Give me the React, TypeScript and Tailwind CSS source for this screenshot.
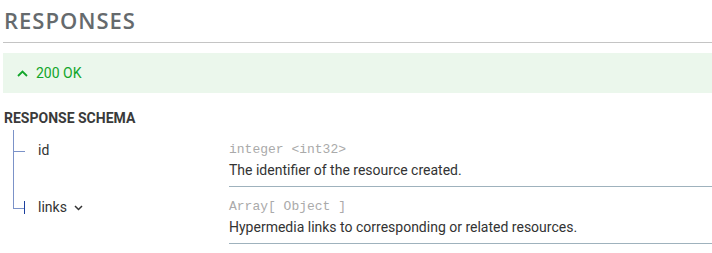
import React from "react";

const ChevronUp = () => (
  <svg width="11" height="7" viewBox="0 0 11 7" fill="none" className="mr-[8px]">
    <path d="M1 6 L5.5 1.5 L10 6" stroke="#12a52a" strokeWidth="1.8" />
  </svg>
);

const ChevronDown = () => (
  <svg width="9" height="6" viewBox="0 0 9 6" fill="none" className="ml-[7px] mt-[2px]">
    <path d="M1 1 L4.5 4.5 L8 1" stroke="#333" strokeWidth="1.5" />
  </svg>
);

export default function App() {
  return (
    <div className="w-[712px] h-[253px] bg-white pl-[3px] overflow-hidden" style={{ fontFamily: "Roboto, sans-serif" }}>
      <h3
        className="pl-[1px] pt-[5px] pb-[7px] text-[22px] leading-[30px] font-semibold tracking-[1px] text-[#656a6d]"
        style={{ fontFamily: "'Open Sans', sans-serif" }}
      >
        RESPONSES
      </h3>
      <div className="h-px bg-[#c4c4c4]" />
      <div className="mt-[10px] h-[40px] bg-[#ebf7ec] flex items-center pl-[14px] text-[14px] text-[#12a52a]">
        <ChevronUp />
        <span>200 OK</span>
      </div>
      <div className="mt-[15px] pl-[1px] text-[14px] leading-[20px] font-bold text-[#3a3a3a]">RESPONSE SCHEMA</div>
      <div className="mt-[2px]">
        <div className="flex">
          <div className="w-[226px] shrink-0 relative pl-[10px]">
            <div className="h-full border-l border-[#7b92c8] pt-[10px] flex">
              <div className="w-[11px] h-px bg-[#7b92c8] mt-[11px]" />
              <span className="ml-[13px] text-[14px] leading-[20px] text-[#333]">id</span>
            </div>
          </div>
          <div className="flex-1 pt-[10px] pb-[6px] border-b border-[#9fb2bd]">
            <div className="text-[13px] leading-[20px] text-[#aaaaaa]" style={{ fontFamily: "'Liberation Mono', 'Courier New', monospace" }}>
              integer &lt;int32&gt;
            </div>
            <div className="text-[14px] leading-[20px] text-[#333]">The identifier of the resource created.</div>
          </div>
        </div>
        <div className="flex">
          <div className="w-[226px] shrink-0 pl-[10px]">
            <div className="flex items-start">
              <div className="w-[11px] h-[22px] border-l border-b border-[#7b92c8]" />
              <div className="w-px h-[13px] bg-[#1c3f9e] mt-[14px]" />
              <div className="ml-[13px] pt-[10px] flex items-center">
                <span className="text-[14px] leading-[20px] text-[#333]">links</span>
                <ChevronDown />
              </div>
            </div>
          </div>
          <div className="flex-1 pt-[10px] pb-[6px] border-b border-[#9fb2bd]">
            <div className="text-[13px] leading-[20px] text-[#aaaaaa] whitespace-pre" style={{ fontFamily: "'Liberation Mono', 'Courier New', monospace" }}>
              {"Array[ Object ]"}
            </div>
            <div className="text-[14px] leading-[20px] text-[#333]">Hypermedia links to corresponding or related resources.</div>
          </div>
        </div>
      </div>
    </div>
  );
}
